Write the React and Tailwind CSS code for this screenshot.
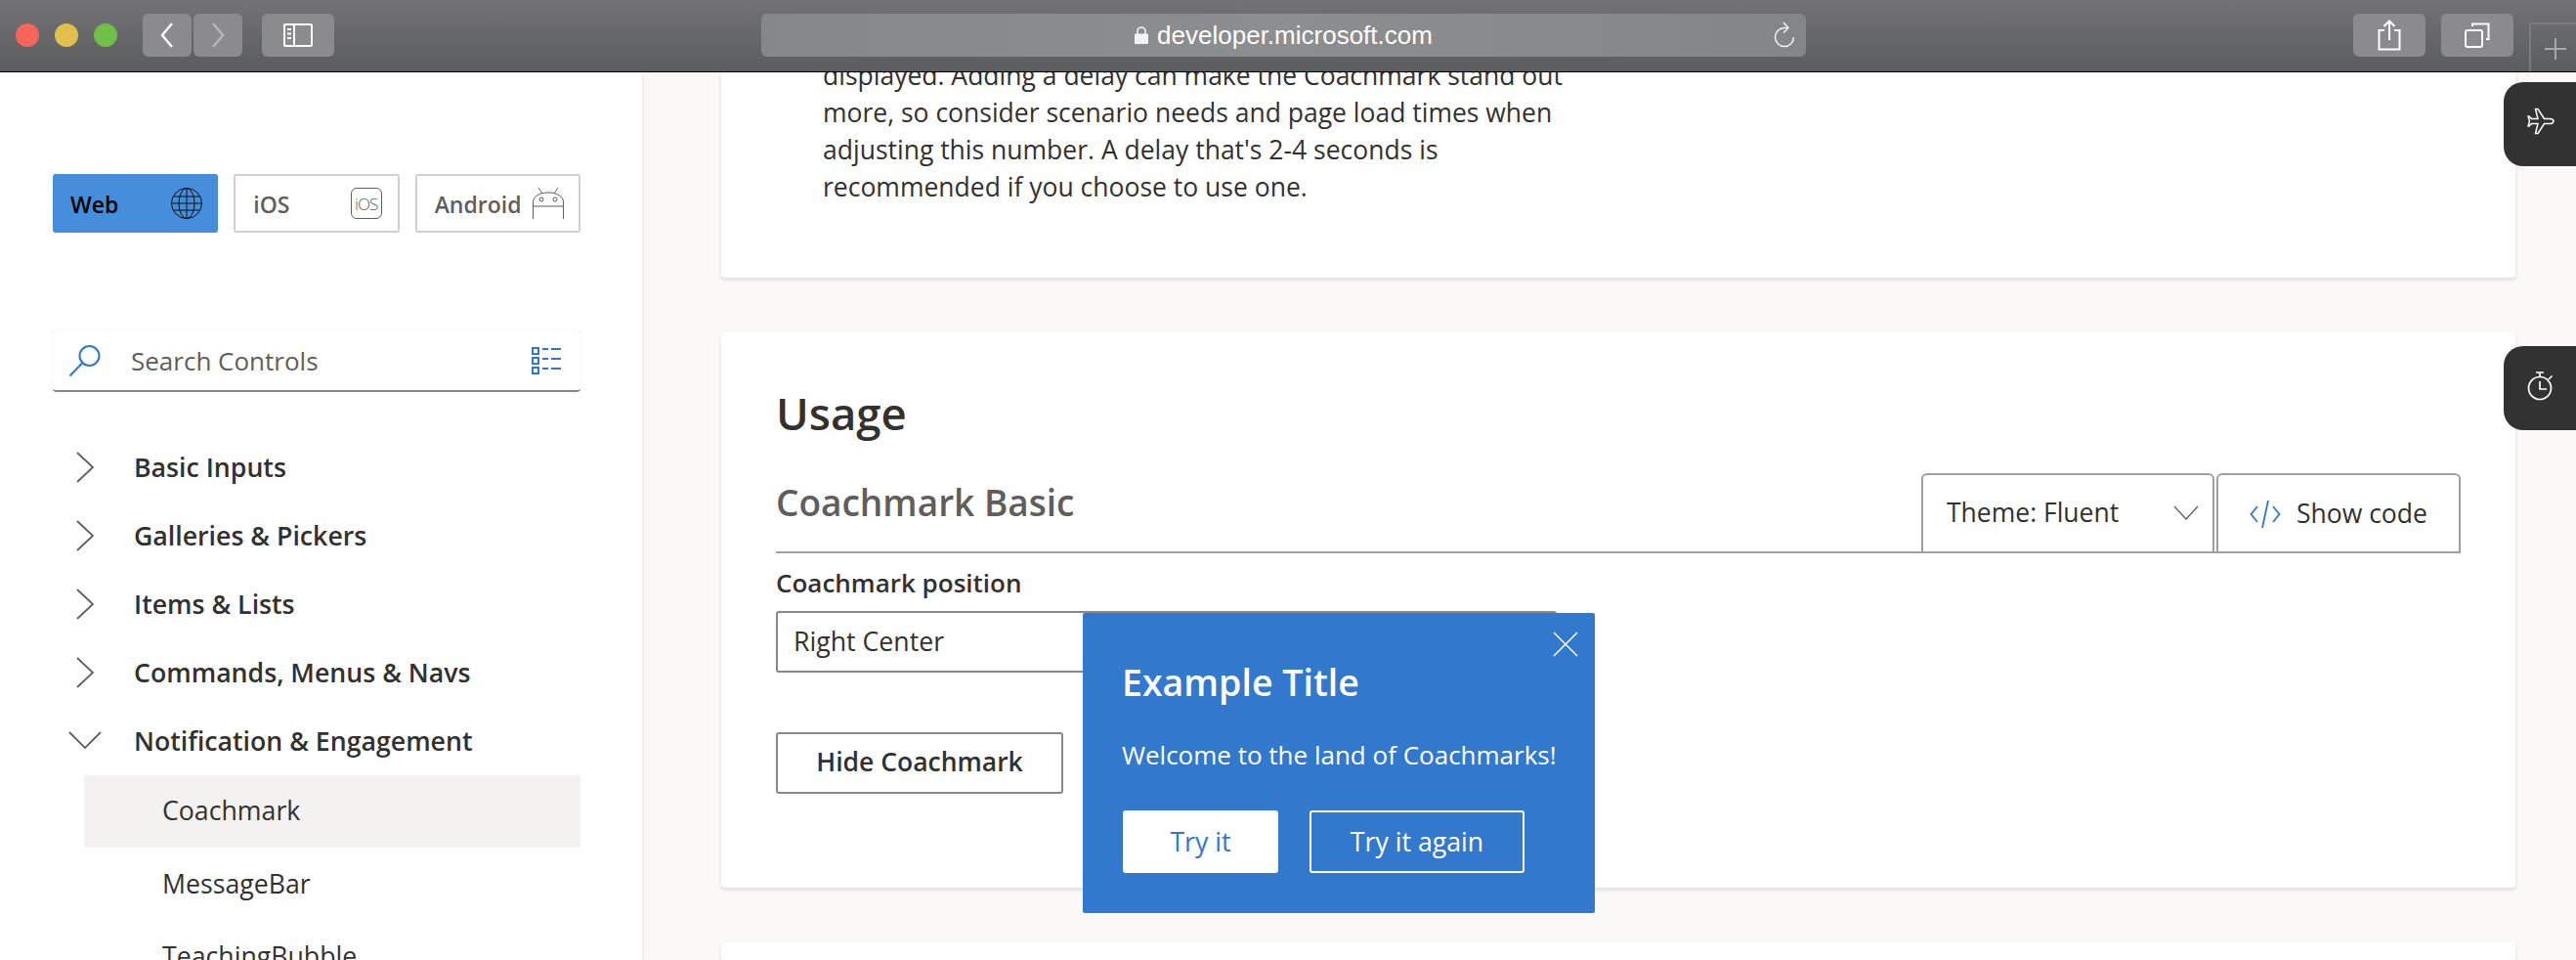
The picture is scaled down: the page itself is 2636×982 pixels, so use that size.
const FONT = "font-['Open_Sans','Noto_Sans',sans-serif]";

const GROUPS = ["Basic Inputs", "Galleries & Pickers", "Items & Lists", "Commands, Menus & Navs"];

function ToolButton({ className, children }) {
  return (
    <div className={`flex h-[44px] items-center justify-center rounded-[6px] bg-[#8b8b8d] ${className}`}>
      {children}
    </div>
  );
}

function Toolbar() {
  return (
    <header className="relative z-20 flex h-[74px] shrink-0 items-start border-b border-black bg-gradient-to-b from-[#737375] to-[#5b5c5d] pl-[16px] pt-[14px]">
      <div className="flex h-[44px] items-center gap-[16px]">
        <span className="h-[24px] w-[24px] rounded-full bg-[#f5655c]" />
        <span className="h-[24px] w-[24px] rounded-full bg-[#e0bf4b]" />
        <span className="h-[24px] w-[24px] rounded-full bg-[#70bf47]" />
      </div>
      <ToolButton className="ml-[26px] w-[50px]">
        <svg width="16" height="26" viewBox="0 0 16 26" fill="none" stroke="#fff" strokeWidth="2.4">
          <path d="M13 1 3 13l10 12" />
        </svg>
      </ToolButton>
      <ToolButton className="ml-[2px] w-[50px]">
        <svg width="16" height="26" viewBox="0 0 16 26" fill="none" stroke="#b5b5b6" strokeWidth="2.4">
          <path d="m3 1 10 12L3 25" />
        </svg>
      </ToolButton>
      <ToolButton className="ml-[20px] w-[74px]">
        <svg width="30" height="24" viewBox="0 0 30 24" fill="none" stroke="#fff" strokeWidth="2">
          <rect x="1" y="1" width="28" height="22" rx="1" />
          <path d="M11 1v22" />
          <path d="M4 6h4M4 10.500h4M4 15h4" />
        </svg>
      </ToolButton>
      <div className="relative ml-[437px] flex h-[44px] w-[1069px] items-center justify-center rounded-[6px] bg-gradient-to-r from-[#868788] via-[#8d8e8f] to-[#848586]">
        <svg width="14" height="18" viewBox="0 0 14 18" className="mr-[9px]">
          <path d="M3 8V5a4 4 0 0 1 8 0v3" fill="none" stroke="#f2f2f2" strokeWidth="1.6" />
          <rect y="7.500" width="14" height="10.500" rx="1" fill="#f2f2f2" />
        </svg>
        <span className="font-['Liberation_Sans',sans-serif] text-[26px] leading-none text-white">developer.microsoft.com</span>
        <svg width="22" height="28" viewBox="0 0 22 28" fill="none" stroke="#f2f2f2" strokeWidth="1.5" className="absolute right-[11px] top-[8px]">
          <path d="M14 6.500h-3a9.500 9.500 0 1 0 9.500 9.500" />
          <path d="m10 1 5 5.500-5 5" />
        </svg>
      </div>
      <ToolButton className="ml-[560px] w-[74px]">
        <svg width="24" height="32" viewBox="0 0 24 32" fill="none" stroke="#fff" strokeWidth="2">
          <path d="M7 11H1.500v19.500h21V11H17" />
          <path d="M12 21V2M6.500 7 12 1.500 17.500 7" />
        </svg>
      </ToolButton>
      <ToolButton className="ml-[16px] w-[74px]">
        <svg width="26" height="26" viewBox="0 0 26 26" fill="none" stroke="#fff" strokeWidth="2">
          <rect x="1" y="8" width="17" height="17" rx="2" />
          <path d="M8 4V1.500h16.500V17H22" />
        </svg>
      </ToolButton>
      <div className="ml-[16px] mt-[9px] flex h-[50px] flex-1 items-center justify-center border-l-2 border-t-2 border-[#7d7d7f]">
        <svg width="24" height="24" viewBox="0 0 24 24" stroke="#a8a8a9" strokeWidth="2" className="-mr-[3px] mt-[2px]">
          <path d="M12 1v22M1 12h22" />
        </svg>
      </div>
    </header>
  );
}

function PlatformButton({ label, active, children }) {
  return (
    <div
      className={`flex h-[60px] w-[170px] items-center justify-between rounded-[3px] pl-[18px] pr-[16px] text-[23px] font-semibold ${
        active ? "bg-[#468ddb] text-black" : "border-2 border-[#d2d0ce] text-[#605e5c]"
      }`}
    >
      <span className="pt-[2px]">{label}</span>
      {children}
    </div>
  );
}

function NavChevron({ open }) {
  return (
    <div className="flex w-[83px] shrink-0 items-center pl-[16px]">
      {open ? (
        <svg width="34" height="20" viewBox="0 0 34 20" fill="none" stroke="#605e5c" strokeWidth="1.800" className="mb-[2px]">
          <path d="m1 2 16 16L33 2" />
        </svg>
      ) : (
        <svg width="34" height="32" viewBox="0 0 34 32" fill="none" stroke="#605e5c" strokeWidth="1.800">
          <path d="m9 1 16 15L9 31" />
        </svg>
      )}
    </div>
  );
}

function Sidebar() {
  return (
    <aside className="z-10 w-[657px] shrink-0 bg-white pl-[54px] pt-[104px] shadow-[1px_0_3px_rgba(0,0,0,0.08)]">
      <div className="flex w-[540px] gap-[16px]">
        <PlatformButton label="Web" active>
          <svg width="32" height="32" viewBox="0 0 32 32" fill="none" stroke="#111" strokeWidth="1">
            <circle cx="16" cy="16" r="15.500" />
            <ellipse cx="16" cy="16" rx="8" ry="15.500" />
            <path d="M16 .5v31M2.500 9h27M.5 16h31M2.500 23h27" />
          </svg>
        </PlatformButton>
        <PlatformButton label="iOS">
          <span className="flex h-[32px] w-[32px] items-center justify-center rounded-[6px] border border-[#605e5c] text-[17px] font-light leading-none tracking-[-1px]">
            iOS
          </span>
        </PlatformButton>
        <PlatformButton label="Android">
          <svg width="32" height="32" viewBox="0 0 32 32" fill="none" stroke="#605e5c" strokeWidth="1" className="-mr-[1px] shrink-0">
            <path d="M.5 32V15C.5 9 7 5 16 5s15.500 4 15.500 10v17M.5 19h31M6 0l4 6M26 0l-4 6" />
            <circle cx="9" cy="12" r="2" />
            <circle cx="23" cy="12" r="2" />
          </svg>
        </PlatformButton>
      </div>

      <div className="mt-[100px] flex h-[63px] w-[540px] items-center rounded-[4px] border-b-2 border-[#8a8886] pl-[16px] pr-[18px] shadow-[0_0_1px_rgba(0,0,0,0.25)]">
        <svg width="34" height="34" viewBox="0 0 34 34" fill="none" stroke="#2f77cf" strokeWidth="2" className="shrink-0">
          <circle cx="21.500" cy="12" r="10" />
          <path d="M14.500 19 1.500 32.500" />
        </svg>
        <span className="ml-[30px] flex-1 pt-[2px] text-[26px] text-[#605e5c]">Search Controls</span>
        <svg width="32" height="28" viewBox="0 0 32 28" fill="none" stroke="#2f77cf" strokeWidth="2">
          <rect x="1" y="1" width="6" height="6" />
          <rect x="1" y="11" width="6" height="6" />
          <rect x="1" y="21" width="6" height="6" />
          <path d="M11 2h6M20 2h10M11 12h6M20 12h10M11 22h6M20 22h10" />
        </svg>
      </div>

      <nav className="mt-[42px] w-[540px]">
        {GROUPS.map((group) => (
          <div key={group} className="flex h-[70px] items-center text-[26.700px] font-semibold text-[#323130]">
            <NavChevron />
            <span>{group}</span>
          </div>
        ))}
        <div className="flex h-[70px] items-center text-[26.700px] font-semibold text-[#323130]">
          <NavChevron open />
          <span>Notification &amp; Engagement</span>
        </div>
        <div className="ml-[32px] text-[26.700px] text-[#323130]">
          <div className="flex h-[74px] items-center bg-[#f3f2f1] pb-[1px] pl-[80px]">Coachmark</div>
          <div className="flex h-[74px] items-center pl-[80px]">MessageBar</div>
          <div className="flex h-[74px] items-center pl-[80px]">TeachingBubble</div>
        </div>
      </nav>
    </aside>
  );
}

function Card({ className, children }) {
  return <section className={`shrink-0 rounded-[4px] bg-white shadow-[0_2px_4px_rgba(0,0,0,0.12)] ${className}`}>{children}</section>;
}

function Coachmark() {
  return (
    <div className="absolute left-[1108px] top-[627px] z-10 h-[307px] w-[524px] rounded-[2px] bg-[#3278cd] pl-[40px] pt-[41px] text-white">
      <svg width="26" height="26" viewBox="0 0 26 26" stroke="#fff" strokeWidth="1.5" className="absolute right-[17px] top-[19px]">
        <path d="m1 1 24 24M25 1 1 25" />
      </svg>
      <h3 className="text-[37.500px] font-semibold leading-[60px]">Example Title</h3>
      <p className="mt-[25px] text-[26px] leading-[38px]">Welcome to the land of Coachmarks!</p>
      <div className="mt-[38px] flex gap-[32px] pl-[1px] text-[26.700px]">
        <button className="h-[64px] w-[159px] rounded-[3px] bg-white text-[#2f77cf]">Try it</button>
        <button className="h-[64px] w-[220px] rounded-[3px] border-2 border-white">Try it again</button>
      </div>
    </div>
  );
}

function Main() {
  return (
    <main className="flex flex-1 flex-col gap-[56px] overflow-hidden bg-[#faf9f8] pl-[81px]">
      <Card className="w-[1836px] pb-[74px] pl-[104px]">
        <p className="-mt-[16px] w-[800px] text-[26.500px] leading-[38px] text-[#323130]">
          displayed. Adding a delay can make the Coachmark stand out more, so consider scenario needs and page load
          times when adjusting this number. A delay that's 2-4 seconds is recommended if you choose to use one.
        </p>
      </Card>

      <Card className="h-[568px] w-[1836px] px-[56px] pt-[54px]">
        <h2 className="text-[45.500px] font-semibold leading-[56px] text-[#323130]">Usage</h2>
        <div className="mt-[34px] flex h-[82px] items-start justify-between border-b-2 border-[#a19f9d]">
          <h3 className="text-[37px] font-semibold leading-[60px] text-[#605e5c]">Coachmark Basic</h3>
          <div className="flex h-[82px] gap-[2px] text-[26.500px] text-[#323130]">
            <div className="flex w-[300px] items-center justify-between rounded-t-[6px] border-2 border-[#a19f9d] pl-[24px] pr-[14px]">
              <span>Theme: Fluent</span>
              <svg width="26" height="16" viewBox="0 0 26 16" fill="none" stroke="#605e5c" strokeWidth="1.300">
                <path d="m1 1 12 13L25 1" />
              </svg>
            </div>
            <div className="flex w-[250px] items-center rounded-t-[6px] border-2 border-b-0 border-[#a19f9d] pl-[32px]">
              <svg width="32" height="30" viewBox="0 0 32 30" fill="none" stroke="#2f77cf" strokeWidth="1.800" className="shrink-0">
                <path d="M8 7 1.500 15 8 23M24 7l6.500 8-6.500 8M19 1l-6 28" />
              </svg>
              <span className="ml-[16px]">Show code</span>
            </div>
          </div>
        </div>
        <label className="mt-[11px] block text-[26px] font-semibold leading-[38px] text-[#323130]">Coachmark position</label>
        <div className="mt-[10px] flex h-[63px] w-[799px] items-center rounded-[3px] border-2 border-[#8a8886] pb-[1px] pl-[16px] text-[26.700px] text-[#323130]">
          Right Center
        </div>
        <button className="mt-[61px] h-[63px] w-[294px] rounded-[3px] border-2 border-[#8a8886] pb-[1px] text-[26.500px] font-semibold text-[#323130]">
          Hide Coachmark
        </button>
      </Card>

      <Card className="h-[400px] w-[1836px]" />
    </main>
  );
}

export default function App() {
  return (
    <div className={`relative flex h-[982px] w-[2636px] flex-col overflow-hidden bg-white ${FONT}`}>
      <Toolbar />
      <div className="flex min-h-0 flex-1">
        <Sidebar />
        <Main />
      </div>
      <Coachmark />
      <div className="absolute left-[2562px] top-[84px] z-10 flex h-[86px] w-[74px] items-center rounded-l-[20px] bg-[#323232] pb-[6px] pl-[24px]">
        <svg width="28" height="28" viewBox="0 0 28 28" fill="none" stroke="#fff" strokeWidth="1.500">
          <path d="M27 14c0-1.400-1.800-2.500-3.500-2.500h-6L11 1.500H8.500l2.500 10H4.500L2 9H1l1.500 5L1 19h1l2.500-2.500H11l-2.500 10H11l6.500-10h6c1.700 0 3.500-1.100 3.500-2.500z" />
        </svg>
      </div>
      <div className="absolute left-[2562px] top-[354px] z-10 flex h-[86px] w-[74px] items-center rounded-l-[20px] bg-[#323232] pb-[4px] pl-[24px]">
        <svg width="28" height="30" viewBox="0 0 28 30" fill="none" stroke="#fff" strokeWidth="1.700">
          <circle cx="13" cy="17" r="11.500" />
          <path d="M9 1h8M13 1v4.500M13 10v8h7M22 8l3.500-3.500" />
        </svg>
      </div>
    </div>
  );
}
